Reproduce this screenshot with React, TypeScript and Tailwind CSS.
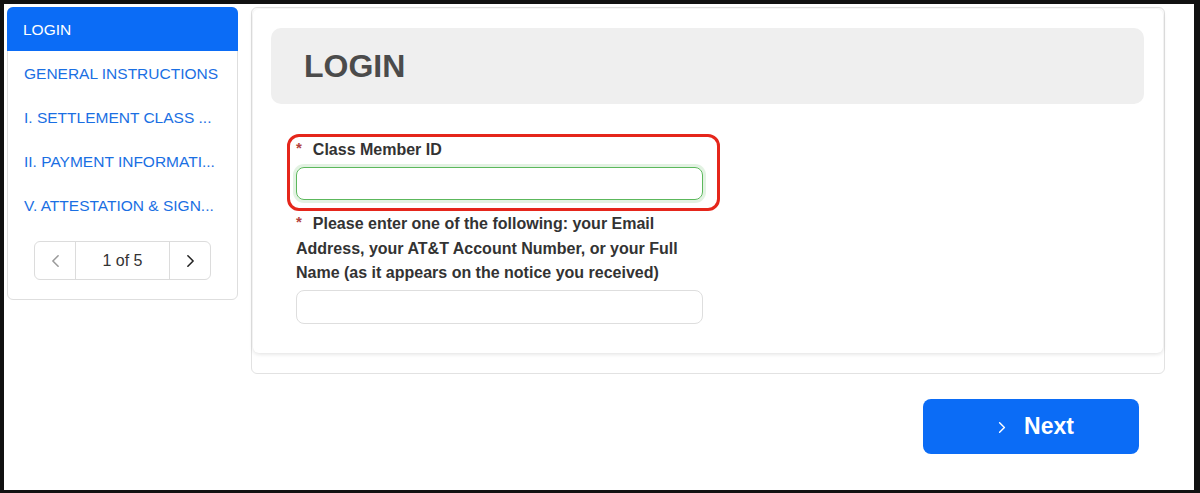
const navItems = [
  { label: 'LOGIN', active: true },
  { label: 'GENERAL INSTRUCTIONS' },
  { label: 'I. SETTLEMENT CLASS ...' },
  { label: 'II. PAYMENT INFORMATI...' },
  { label: 'V. ATTESTATION & SIGN...' },
];

function Chevron({ dir, className }: { dir: 'left' | 'right'; className?: string }) {
  return (
    <svg viewBox="0 0 10 16" className={className} fill="none" stroke="currentColor" strokeWidth={1.8} strokeLinecap="round" strokeLinejoin="round">
      {dir === 'left' ? <polyline points="8,2 2,8 8,14" /> : <polyline points="2,2 8,8 2,14" />}
    </svg>
  );
}

function Star() {
  return <span className="text-[#b3443e] text-[15px] align-top leading-[20px] mr-[11px]">*</span>;
}

export default function App() {
  return (
    <div
      className="h-[493px] w-[1200px] overflow-hidden border-t-[4px] border-l-[4px] border-r-[6px] border-b-[3px] border-[#111] bg-white"
      style={{ fontFamily: '"Liberation Sans", Arial, sans-serif' }}
    >
      <div className="flex items-start gap-[13px] pl-[3px] pt-[3px]">
        {/* Sidebar */}
        <div className="w-[231px] shrink-0 rounded-md border border-[#dedede] pb-[19px]">
          {navItems.map((item) => (
            <div
              key={item.label}
              className={
                item.active
                  ? 'h-[44px] flex items-center pl-[16px] pt-px -mx-px -mt-px rounded-t-md bg-[#0b6cf6] text-white text-[15.5px]'
                  : 'h-[44px] flex items-center pl-[16px] pt-[2px] text-[#1a6fe3] text-[15.5px]'
              }
            >
              {item.label}
            </div>
          ))}
          <div className="mt-[14px] flex justify-center">
            <div className="flex h-[39px] w-[177px] rounded-md border border-[#dcdcdc] text-[#333]">
              <div className="flex w-[41px] items-center justify-center border-r border-[#dcdcdc] text-[#9a9a9a]">
                <Chevron dir="left" className="w-[9px] h-[14px]" />
              </div>
              <div className="flex flex-1 items-center justify-center text-[16px]">1 of 5</div>
              <div className="flex w-[41px] items-center justify-center border-l border-[#dcdcdc] text-[#222]">
                <Chevron dir="right" className="w-[9px] h-[14px]" />
              </div>
            </div>
          </div>
        </div>

        {/* Main */}
        <div className="w-[914px] shrink-0">
          <div className="rounded-md border border-[#e2e2e2] p-px pb-[20px]">
            <div className="rounded-md bg-white shadow-[0_1px_4px_rgba(0,0,0,0.13)] pt-[19px] pl-[18px] pr-[19px] pb-[29px]">
              <div className="flex h-[76px] items-center rounded-[10px] bg-[#efefef] pl-[33px]">
                <h1 className="text-[32px] font-bold text-[#4b4b4b]">LOGIN</h1>
              </div>

              <div className="mt-[34px] w-[407px] ml-[25px] text-[16px] font-bold text-[#333]">
                <div className="relative">
                  <div className="pointer-events-none absolute -left-[9px] -right-[17px] -top-[4px] -bottom-[11px] rounded-[12px] border-[3px] border-[#e5261b]" />
                  <label className="block leading-[24px]">
                    <Star />
                    Class Member ID
                  </label>
                  <input className="mt-[5px] block h-[33px] w-full rounded-[8px] border border-[#5cb85c] shadow-[0_0_0_3px_rgba(92,184,92,0.18)] outline-none" />
                </div>

                <label className="mt-[12px] block leading-[24.5px]">
                  <Star />
                  Please enter one of the following: your Email Address, your AT&amp;T Account Number, or your Full Name (as it appears on the notice you received)
                </label>
                <input className="mt-[4px] block h-[34px] w-full rounded-[8px] border border-[#dedede] outline-none" />
              </div>
            </div>
          </div>

          <div className="mt-[25px] flex justify-end pr-[26px]">
            <button className="flex h-[55px] w-[216px] items-center justify-center gap-[18px] rounded-[8px] bg-[#0b6cf6] pl-[10px] text-[23px] font-bold text-white">
              <Chevron dir="right" className="w-[8px] h-[13px] mt-[2px]" />
              Next
            </button>
          </div>
        </div>
      </div>
    </div>
  );
}
